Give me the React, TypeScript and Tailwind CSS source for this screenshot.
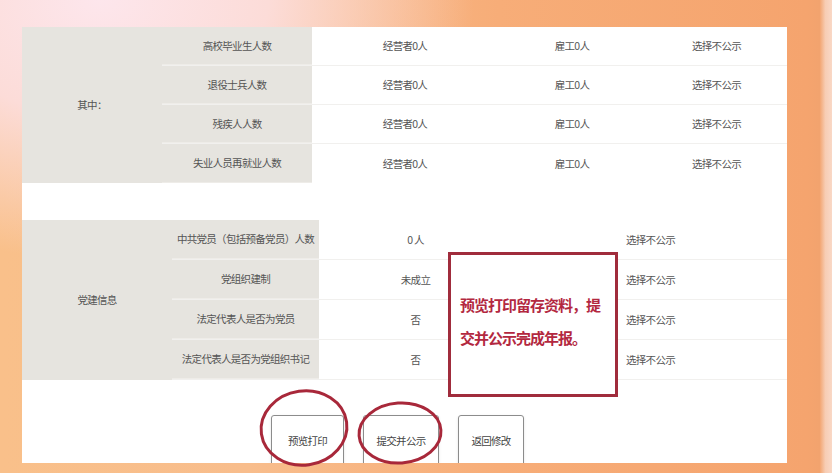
import React from "react"

const font = { fontFamily: '"Noto Sans CJK SC", "Noto Sans", sans-serif' }

const employment = ["高校毕业生人数", "退役士兵人数", "残疾人人数", "失业人员再就业人数"]

const party = [
  { label: "中共党员（包括预备党员）人数", value: "0 人" },
  { label: "党组织建制", value: "未成立" },
  { label: "法定代表人是否为党员", value: "否" },
  { label: "法定代表人是否为党组织书记", value: "否" },
]

export default function App() {
  return (
    <div
      className="relative w-[832px] h-[473px] overflow-hidden bg-[radial-gradient(ellipse_45%_55%_at_12%_0%,#fde6ec_0%,#fcdcd8_45%,rgba(251,210,190,0)_100%),linear-gradient(to_right,#f9c08a_0%,#f8bd8c_30%,#f7ad78_60%,#f5a46e_97%,#f2a36e_98.5%,#f7cdb4_99.2%,#f9d8c6_100%)]"
      style={font}
    >
      <div className="pt-[27px] pl-[22px]">
        {/* Panel */}
        <div className="relative w-[765px] h-[436px] bg-white overflow-hidden text-[10.5px] tracking-[-0.7px] text-[#555]">
          {/* Section 1 */}
          <div className="flex">
            <div className="w-[140px] bg-[#e6e4df] flex items-center justify-center">其中：</div>
            <div className="flex-1 flex flex-col">
              {employment.map((label) => (
                <div key={label} className="flex h-[39px] border-b border-[#f1f0ee] last:border-b-0">
                  <div className="w-[150px] bg-[#e6e4df] border-b border-[#eeece8] flex items-center justify-center">
                    {label}
                  </div>
                  <div className="w-[186px] flex items-center justify-center">经营者0人</div>
                  <div className="w-[148px] flex items-center justify-center">雇工0人</div>
                  <div className="w-[141px] flex items-center justify-center">选择不公示</div>
                </div>
              ))}
            </div>
          </div>

          {/* Section 2 */}
          <div className="flex mt-[37px]">
            <div className="w-[150px] bg-[#e6e4df] flex items-center justify-center">党建信息</div>
            <div className="flex-1 flex flex-col">
              {party.map((row) => (
                <div key={row.label} className="flex h-[40px] border-b border-[#f1f0ee]">
                  <div className="w-[147px] bg-[#e6e4df] border-b border-[#eeece8] flex items-center justify-center">
                    {row.label}
                  </div>
                  <div className="w-[193px] flex items-center justify-center">{row.value}</div>
                  <div className="w-[114px]" />
                  <div className="flex items-center">选择不公示</div>
                </div>
              ))}
            </div>
          </div>

          {/* Buttons */}
          <div className="flex pl-[249px] gap-[19px] mt-[35px]">
            <button className="w-[73px] h-[52px] border border-[#8c8c8c] rounded-[3px] bg-white shadow-sm text-[#444]">
              预览打印
            </button>
            <button className="w-[76px] h-[52px] border border-[#8c8c8c] rounded-[3px] bg-white shadow-sm text-[#444]">
              提交并公示
            </button>
            <button className="w-[66px] h-[52px] border border-[#8c8c8c] rounded-[3px] bg-white shadow-sm text-[#444]">
              返回修改
            </button>
          </div>

          {/* Annotation box */}
          <div className="absolute left-[426px] top-[225px] w-[170px] h-[145px] bg-white border-[3px] border-[#a02c3c] flex items-center pl-[9px] pr-[4px]">
            <p className="-mt-[8px] text-[15px] leading-[33px] font-semibold tracking-[-1px] text-[#b3283f]">
              预览打印留存资料，提交并公示完成年报。
            </p>
          </div>
        </div>
      </div>

      {/* Circle annotations */}
      <svg className="absolute inset-0 pointer-events-none" width="832" height="473">
        <ellipse cx="304" cy="428" rx="43" ry="37" fill="none" stroke="#a8283a" strokeWidth="3" transform="rotate(-8 304 428)" />
        <ellipse cx="400" cy="433" rx="41" ry="30" fill="none" stroke="#a8283a" strokeWidth="3" transform="rotate(-4 400 433)" />
      </svg>
    </div>
  )
}
